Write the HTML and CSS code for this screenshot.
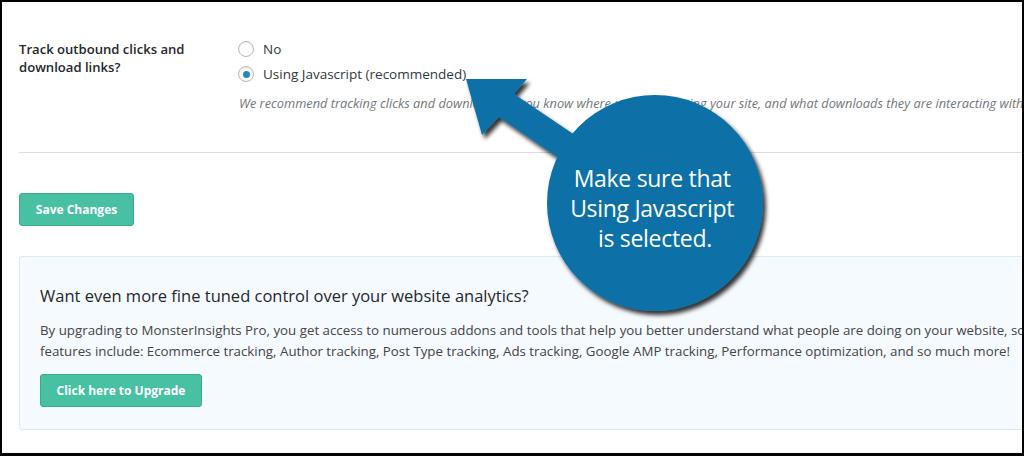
FILE: index.html
```html
<!DOCTYPE html>
<html lang="en">
<head>
<meta charset="utf-8">
<title>Engagement settings</title>
<link rel="stylesheet" href="styles.css">
</head>
<body>
<div class="frame">
  <div class="page">
    <div class="setting">
      <div class="setting-label"><span>Track outbound clicks and download links?</span></div>
      <div class="setting-field">
        <label class="radio-row"><span class="radio"></span><span>No</span></label>
        <label class="radio-row"><span class="radio checked"></span><span>Using Javascript (recommended)</span></label>
        <p class="description">We recommend tracking clicks and downloads so you know where users are exiting your site, and what downloads they are interacting with.</p>
      </div>
    </div>
    <hr class="divider">
    <button class="btn btn-save">Save Changes</button>
    <div class="upsell">
      <h3 class="upsell-title">Want even more fine tuned control over your website analytics?</h3>
      <p class="upsell-text"><span class="line">By upgrading to MonsterInsights Pro, you get access to numerous addons and tools that help you better understand what people are doing on your website, so</span><span class="line">features include: Ecommerce tracking, Author tracking, Post Type tracking, Ads tracking, Google AMP tracking, Performance optimization, and so much more!</span></p>
      <button class="btn btn-upgrade">Click here to Upgrade</button>
    </div>
  </div>
  <svg class="annotation" viewBox="0 0 1024 456" width="1024" height="456">
    <defs>
      <filter id="shadow" x="-20%" y="-20%" width="140%" height="140%">
        <feDropShadow dx="3" dy="4" stdDeviation="2.2" flood-color="#000" flood-opacity="0.8"/>
      </filter>
    </defs>
    <g filter="url(#shadow)">
      <polygon class="callout" points="466,79 527,79 514,94 600,152 585,176 499,117 482,135"/>
      <circle class="callout" cx="655" cy="203" r="108"/>
    </g>
    <text class="callout-text" text-anchor="middle">
      <tspan x="655" y="187">Make sure that</tspan>
      <tspan x="655" y="217">Using Javascript</tspan>
      <tspan x="655" y="247">is selected.</tspan>
    </text>
  </svg>
</div>
</body>
</html>
```

FILE: styles.css
```css
html, body {
  margin: 0;
  padding: 0;
  background: #000;
}

body {
  font-family: "Segoe UI", "Open Sans", "Noto Sans", sans-serif;
}

.frame {
  position: relative;
  width: 1024px;
  height: 456px;
  box-sizing: border-box;
  border: 2px solid #000;
  border-bottom-width: 3px;
  background: #fff;
  overflow: hidden;
}

.page {
  width: 1120px;
  padding: 38px 0 0 17px;
}

.setting {
  display: flex;
}

.setting-label {
  flex: 0 0 219px;
}

.setting-label span {
  display: block;
  width: 180px;
  font-size: 13.1px;
  font-weight: 600;
  line-height: 18px;
  color: #23282d;
}

.setting-field {
  flex: 1;
}

.radio-row {
  display: flex;
  align-items: center;
  height: 18px;
  margin-bottom: 7px;
  font-size: 13.5px;
  color: #32373c;
}

.radio {
  width: 16px;
  height: 16px;
  box-sizing: border-box;
  border: 1px solid #b4b9be;
  border-radius: 50%;
  background: #fff;
  box-shadow: inset 0 1px 2px rgba(0, 0, 0, 0.1);
  margin-right: 9px;
  display: flex;
  align-items: center;
  justify-content: center;
}

.radio.checked::after {
  content: "";
  width: 7px;
  height: 7px;
  border-radius: 50%;
  background: #1e8cbe;
}

.description {
  margin: 11px 0 0 1px;
  font-size: 12.8px;
  font-style: italic;
  line-height: 18px;
  color: #72777c;
  white-space: nowrap;
}

.divider {
  margin: 40px 0 0 0;
  border: 0;
  border-top: 1px solid #dcdcde;
  height: 0;
}

.btn {
  display: block;
  height: 33px;
  box-sizing: border-box;
  padding: 0;
  border: 1px solid #3aa98c;
  border-radius: 3px;
  background: #48c1a2;
  color: #fff;
  font-family: "Segoe UI", "Open Sans", "Noto Sans", sans-serif;
  font-size: 12px;
  font-weight: 700;
}

.btn-save {
  margin-top: 40px;
  width: 115px;
}

.upsell {
  margin-top: 30px;
  padding: 28px 20px 22px 20px;
  border: 1px solid #d7eafb;
  border-radius: 3px;
  background: #f5faff;
}

.upsell-title {
  margin: 0 0 13px 0;
  font-size: 16.5px;
  font-weight: 500;
  line-height: 22px;
  color: #23282d;
}

.upsell-text {
  margin: 0 0 12px 0;
  font-size: 13.3px;
  line-height: 21px;
  color: #444;
}

.upsell-text .line {
  display: block;
  white-space: nowrap;
}

.btn-upgrade {
  width: 162px;
}

.annotation {
  position: absolute;
  left: -2px;
  top: -2px;
  pointer-events: none;
}

.callout {
  fill: #0d6fa7;
}

.callout-text {
  fill: #fff;
  font-family: "Open Sans", "Noto Sans", sans-serif;
  font-size: 23px;
  letter-spacing: -0.3px;
}
```
